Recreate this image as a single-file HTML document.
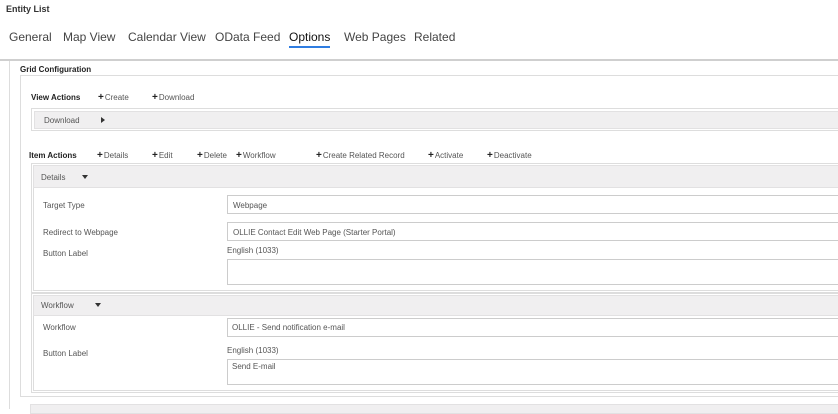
<!DOCTYPE html>
<html><head><style>
*{box-sizing:border-box;margin:0;padding:0}
body{width:838px;height:409px;overflow:hidden;background:#fff;font-family:"Liberation Sans",sans-serif;color:#333;position:relative}
.a{position:absolute;white-space:nowrap}
.s{font-size:8px;color:#555}
.b{font-weight:bold;color:#222}
.tab{font-size:12px;color:#444;top:30px}
.box{position:absolute;border:1px solid #ddd;background:#fff}
.gray{position:absolute;background:#f0eff0;border:1px solid #e2e1e2}
.inp{position:absolute;border:1px solid #ccc;background:#fff}
.plus{font-weight:bold;font-size:10px;color:#222;margin-right:1px}
.tri{position:absolute;width:0;height:0}
</style></head><body>
<div class="a" style="left:6px;top:4px;font-size:9px;color:#333;font-weight:bold">Entity List</div>
<div class="a tab" style="left:9px">General</div>
<div class="a tab" style="left:63px">Map View</div>
<div class="a tab" style="left:128px">Calendar View</div>
<div class="a tab" style="left:215px">OData Feed</div>
<div class="a tab" style="left:289px;color:#111">Options</div>
<div class="a" style="left:289px;top:46px;width:41px;height:2px;background:#2f7de1"></div>
<div class="a tab" style="left:344px">Web Pages</div>
<div class="a tab" style="left:414px">Related</div>
<div class="a" style="left:0;top:59px;width:838px;height:2px;background:#cfcfcf"></div>
<div class="a" style="left:9px;top:61px;width:1px;height:348px;background:#ddd"></div>

<div class="a b" style="left:20px;top:65px;font-size:8px">Grid Configuration</div>
<div class="box" style="left:20px;top:75px;width:830px;height:322px"></div>

<div class="a s b" style="left:31px;top:93px">View Actions</div>
<div class="a s" style="left:98px;top:92px"><span class="plus">+</span>Create</div>
<div class="a s" style="left:152px;top:92px"><span class="plus">+</span>Download</div>
<div class="box" style="left:31px;top:108px;width:820px;height:23px"></div>
<div class="gray" style="left:34px;top:111px;width:815px;height:18px"></div>
<div class="a s" style="left:44px;top:116px">Download</div>
<div class="tri" style="left:101px;top:117px;border-left:4px solid #333;border-top:3px solid transparent;border-bottom:3px solid transparent"></div>

<div class="a s b" style="left:29px;top:151px">Item Actions</div>
<div class="a s" style="left:97px;top:150px"><span class="plus">+</span>Details</div>
<div class="a s" style="left:152px;top:150px"><span class="plus">+</span>Edit</div>
<div class="a s" style="left:197px;top:150px"><span class="plus">+</span>Delete</div>
<div class="a s" style="left:236px;top:150px"><span class="plus">+</span>Workflow</div>
<div class="a s" style="left:316px;top:150px"><span class="plus">+</span>Create Related Record</div>
<div class="a s" style="left:428px;top:150px"><span class="plus">+</span>Activate</div>
<div class="a s" style="left:487px;top:150px"><span class="plus">+</span>Deactivate</div>

<div class="box" style="left:31px;top:163px;width:820px;height:130px"></div>
<div class="gray" style="left:33px;top:165px;width:815px;height:23px"></div>
<div class="a s" style="left:41px;top:173px">Details</div>
<div class="tri" style="left:82px;top:175px;border-top:4px solid #333;border-left:3.5px solid transparent;border-right:3.5px solid transparent"></div>
<div class="box" style="left:33px;top:188px;width:815px;height:103px;border-top:none"></div>
<div class="a s" style="left:43px;top:201px">Target Type</div>
<div class="inp" style="left:227px;top:195px;width:620px;height:19px"></div>
<div class="a s" style="left:233px;top:201px">Webpage</div>
<div class="a s" style="left:43px;top:228px">Redirect to Webpage</div>
<div class="inp" style="left:227px;top:222px;width:620px;height:19px"></div>
<div class="a s" style="left:233px;top:228px">OLLIE Contact Edit Web Page (Starter Portal)</div>
<div class="a s" style="left:43px;top:249px">Button Label</div>
<div class="a s" style="left:227px;top:246px">English (1033)</div>
<div class="inp" style="left:227px;top:259px;width:620px;height:26px"></div>

<div class="box" style="left:31px;top:293px;width:820px;height:100px"></div>
<div class="gray" style="left:33px;top:295px;width:815px;height:21px"></div>
<div class="a s" style="left:41px;top:301px">Workflow</div>
<div class="tri" style="left:95px;top:303px;border-top:4px solid #333;border-left:3.5px solid transparent;border-right:3.5px solid transparent"></div>
<div class="box" style="left:33px;top:316px;width:815px;height:75px;border-top:none"></div>
<div class="a s" style="left:43px;top:323px">Workflow</div>
<div class="inp" style="left:227px;top:318px;width:620px;height:19px"></div>
<div class="a s" style="left:232px;top:323px">OLLIE - Send notification e-mail</div>
<div class="a s" style="left:43px;top:349px">Button Label</div>
<div class="a s" style="left:227px;top:346px">English (1033)</div>
<div class="inp" style="left:227px;top:359px;width:620px;height:26px"></div>
<div class="a s" style="left:232px;top:362px">Send E-mail</div>

<div class="gray" style="left:30px;top:404px;width:820px;height:10px"></div>
</body></html>
